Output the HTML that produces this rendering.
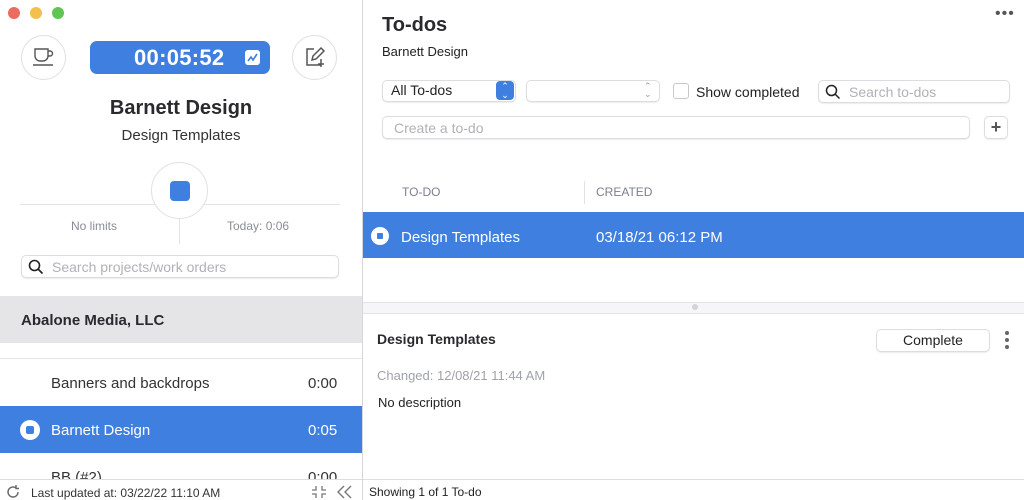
<!DOCTYPE html><html><head><style>
*{margin:0;padding:0;box-sizing:border-box}
body{width:1024px;height:500px;overflow:hidden;background:#fff;font-family:"Liberation Sans",sans-serif;color:#222;position:relative}
.a{position:absolute;white-space:nowrap}
.c{border-radius:50%;position:absolute}
.box{position:absolute;border:1px solid #dcdde2;border-radius:5px;background:#fff;box-shadow:0 1px 1px rgba(0,0,0,.08)}
</style></head><body>
<div class="a" style="left:362px;top:0;width:1px;height:500px;background:#d6d6da"></div>
<div class="c" style="left:8px;top:7px;width:12px;height:12px;background:#ed6a5e"></div>
<div class="c" style="left:30px;top:7px;width:12px;height:12px;background:#f5bf4f"></div>
<div class="c" style="left:52px;top:7px;width:12px;height:12px;background:#61c554"></div>
<div class="c" style="left:21px;top:35px;width:45px;height:45px;border:1px solid #dfe1e8"></div>
<svg class="a" style="left:32px;top:47px" width="24" height="20" viewBox="0 0 24 20" fill="none" stroke="#555" stroke-width="1.4"><path d="M3 2h13v7a5 5 0 0 1-5 5H8a5 5 0 0 1-5-5z M16 4h2a2.5 2.5 0 0 1 0 5h-2 M1 18h20"/></svg>
<div class="a" style="left:90px;top:41px;width:180px;height:33px;background:#3f7fe0;border-radius:7px"></div>
<div class="a" style="left:134px;top:45px;color:#fff;font-weight:bold;font-size:22px;line-height:26px;letter-spacing:0.3px">00:05:52</div>
<div class="a" style="left:245px;top:50px;width:15px;height:15px;background:#fff;border-radius:3px"></div>
<svg class="a" style="left:246px;top:51px" width="13" height="13"><path d="M2 10l3-4 2 3 4-6" stroke="#3f7fe0" stroke-width="1.6" fill="none"/></svg>
<div class="c" style="left:292px;top:35px;width:45px;height:45px;border:1px solid #dfe1e8"></div>
<svg class="a" style="left:304px;top:46px" width="22" height="22" viewBox="0 0 22 22" fill="none" stroke="#555" stroke-width="1.5"><path d="M10 3H3v16h14v-6 M8 14l1-4 8-8 3 3-8 8z M17 15v6 M14 18h6"/></svg>
<div class="a" style="left:0;width:362px;text-align:center;top:97px;font-weight:bold;font-size:20px;color:#2a2a2e">Barnett Design</div>
<div class="a" style="left:0;width:362px;text-align:center;top:127px;font-size:15px;color:#333">Design Templates</div>
<div class="a" style="left:20px;top:204px;width:320px;height:1px;background:#e2e3e8"></div>
<div class="a" style="left:179px;top:218px;width:1px;height:26px;background:#e2e3e8"></div>
<div class="c" style="left:151px;top:162px;width:57px;height:57px;border:1px solid #dfe1e8;background:#fff"></div>
<div class="a" style="left:170px;top:181px;width:20px;height:20px;background:#3f7fe0;border-radius:4px"></div>
<div class="a" style="left:71px;top:219px;font-size:12px;color:#8a8d96">No limits</div>
<div class="a" style="left:227px;top:219px;font-size:12px;color:#8a8d96">Today: 0:06</div>
<div class="box" style="left:21px;top:255px;width:318px;height:23px"></div>
<svg class="a" style="left:28px;top:259px" width="16" height="16" fill="none" stroke="#222" stroke-width="1.6"><circle cx="6.5" cy="6.5" r="5"/><path d="M10 10l4.5 4.5"/></svg>
<div class="a" style="left:52px;top:259px;font-size:14px;color:#b0b2b8">Search projects/work orders</div>
<div class="a" style="left:0;top:296px;width:362px;height:47px;background:#e5e5e8"></div>
<div class="a" style="left:21px;top:312px;font-weight:bold;font-size:15px;color:#2a2a2e">Abalone Media, LLC</div>
<div class="a" style="left:0;top:358px;width:362px;height:1px;background:#e6e6ea"></div>
<div class="a" style="left:51px;top:375px;font-size:15px;color:#333">Banners and backdrops</div>
<div class="a" style="left:308px;top:375px;font-size:15px;color:#333">0:00</div>
<div class="a" style="left:0;top:406px;width:362px;height:47px;background:#3f7fe0"></div>
<div class="c" style="left:20px;top:420px;width:20px;height:20px;background:#fff"></div>
<div class="a" style="left:26px;top:426px;width:8px;height:8px;background:#3f7fe0;border-radius:2px"></div>
<div class="a" style="left:51px;top:422px;font-size:15px;color:#fff">Barnett Design</div>
<div class="a" style="left:308px;top:422px;font-size:15px;color:#fff">0:05</div>
<div class="a" style="left:51px;top:469px;font-size:15px;color:#333">BB (#2)</div>
<div class="a" style="left:308px;top:469px;font-size:15px;color:#333">0:00</div>
<div class="a" style="left:0;top:479px;width:1024px;height:21px;background:#fff;border-top:1px solid #dedee2"></div>
<svg class="a" style="left:6px;top:485px" width="14" height="14" fill="none" stroke="#666" stroke-width="1.4"><path d="M12 7a5 5 0 1 1-2-4 M10 0v3.5h3"/></svg>
<div class="a" style="left:31px;top:486px;font-size:12px;color:#333">Last updated at: 03/22/22 11:10 AM</div>
<svg class="a" style="left:311px;top:485px" width="16" height="14" fill="none" stroke="#777" stroke-width="1.3"><path d="M1 5h4V1 M11 1v4h4 M1 9h4v4 M11 13V9h4"/></svg>
<svg class="a" style="left:336px;top:485px" width="18" height="14" fill="none" stroke="#777" stroke-width="1.4"><path d="M8 1L2 7l6 6 M15 1L9 7l6 6"/></svg>
<div class="a" style="left:382px;top:14px;font-weight:bold;font-size:20px;color:#2a2a2e">To-dos</div>
<div class="a" style="left:995px;top:5px;font-size:16px;color:#555;letter-spacing:1px">•••</div>
<div class="a" style="left:382px;top:44px;font-size:13px;color:#222">Barnett Design</div>
<div class="box" style="left:382px;top:80px;width:134px;height:22px"></div>
<div class="a" style="left:391px;top:82px;font-size:14px">All To-dos</div>
<div class="a" style="left:496px;top:81px;width:18px;height:19px;background:#3f7fe0;border-radius:4px;color:#fff;font-size:9px;text-align:center;line-height:9px;padding-top:1px">⌃<br>⌄</div>
<div class="box" style="left:526px;top:80px;width:134px;height:22px"></div>
<div class="a" style="left:644px;top:82px;font-size:9px;color:#999;line-height:8px">⌃<br>⌄</div>
<div class="a" style="left:673px;top:83px;width:16px;height:16px;border:1px solid #c8c9ce;border-radius:3px"></div>
<div class="a" style="left:696px;top:84px;font-size:14px;color:#222">Show completed</div>
<div class="box" style="left:818px;top:80px;width:192px;height:23px"></div>
<svg class="a" style="left:825px;top:84px" width="16" height="16" fill="none" stroke="#222" stroke-width="1.5"><circle cx="6.5" cy="6.5" r="5"/><path d="M10 10l4.5 4.5"/></svg>
<div class="a" style="left:849px;top:84px;font-size:14px;color:#b0b2b8">Search to-dos</div>
<div class="box" style="left:382px;top:116px;width:588px;height:23px"></div>
<div class="a" style="left:394px;top:120px;font-size:14px;color:#b0b2b8">Create a to-do</div>
<div class="box" style="left:984px;top:116px;width:24px;height:23px;text-align:center;font-size:18px;line-height:20px;color:#555;font-weight:bold">+</div>
<div class="a" style="left:402px;top:185px;font-size:12px;color:#7c8090">TO-DO</div>
<div class="a" style="left:584px;top:181px;width:1px;height:23px;background:#e2e3e8"></div>
<div class="a" style="left:596px;top:185px;font-size:12px;color:#7c8090">CREATED</div>
<div class="a" style="left:363px;top:212px;width:661px;height:46px;background:#3f7fe0"></div>
<div class="c" style="left:371px;top:227px;width:18px;height:18px;background:#fff"></div>
<div class="a" style="left:377px;top:233px;width:6px;height:6px;background:#3f7fe0;border-radius:1px"></div>
<div class="a" style="left:401px;top:229px;font-size:15px;color:#fff">Design Templates</div>
<div class="a" style="left:596px;top:229px;font-size:15px;color:#fff">03/18/21 06:12 PM</div>
<div class="a" style="left:363px;top:302px;width:661px;height:12px;background:#f6f6f8;border-top:1px solid #e2e2e6;border-bottom:1px solid #e2e2e6"></div>
<div class="c" style="left:692px;top:304px;width:6px;height:6px;background:#d4d4d8"></div>
<div class="a" style="left:377px;top:331px;font-weight:bold;font-size:14px;color:#2a2a2e">Design Templates</div>
<div class="box" style="left:876px;top:329px;width:114px;height:23px;text-align:center;font-size:14px;line-height:21px">Complete</div>
<div class="a" style="left:1005px;top:331px;width:4px;height:18px;font-size:0">
<div class="c" style="left:0;top:0;width:4px;height:4px;background:#666"></div>
<div class="c" style="left:0;top:7px;width:4px;height:4px;background:#666"></div>
<div class="c" style="left:0;top:14px;width:4px;height:4px;background:#666"></div></div>
<div class="a" style="left:377px;top:368px;font-size:13px;color:#a0a3ab">Changed: 12/08/21 11:44 AM</div>
<div class="a" style="left:378px;top:395px;font-size:13px;color:#222">No description</div>
<div class="a" style="left:369px;top:485px;font-size:12px;color:#222">Showing 1 of 1 To-do</div>
<div class="a" style="left:362px;top:479px;width:1px;height:21px;background:#d6d6da"></div>
</body></html>
